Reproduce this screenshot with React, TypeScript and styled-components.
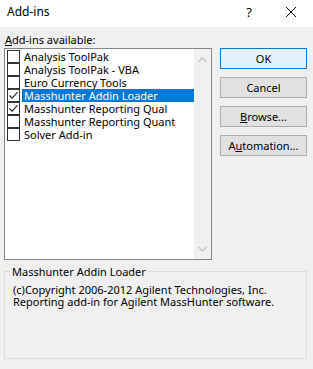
import React from "react";
import styled, { createGlobalStyle } from "styled-components";

const GlobalStyle = createGlobalStyle`
  html, body {
    margin: 0;
    padding: 0;
    background: #f0f0f0;
  }
  body {
    font-family: "Noto Sans", "Open Sans", sans-serif;
    font-size: 11px;
    line-height: 13px;
    color: #000;
  }
`;

const addins = [
  { name: "Analysis ToolPak", checked: false },
  { name: "Analysis ToolPak - VBA", checked: false },
  { name: "Euro Currency Tools", checked: false },
  { name: "Masshunter Addin Loader", checked: true, selected: true },
  { name: "Masshunter Reporting Qual", checked: true },
  { name: "Masshunter Reporting Quant", checked: false },
  { name: "Solver Add-in", checked: false },
];

function App() {
  return (
    <Dialog>
      <GlobalStyle />
      <TitleBar>
        <Title>Add-ins</Title>
        <TitleButtons>
          <HelpGlyph>?</HelpGlyph>
          <svg width="12" height="12" viewBox="0 0 12 12">
            <path d="M1 1 L11 11 M11 1 L1 11" stroke="#000" strokeWidth="1" />
          </svg>
        </TitleButtons>
      </TitleBar>
      <Body>
        <Label>
          <u>A</u>dd-ins available:
        </Label>
        <Main>
          <ListBox>
            <Items>
              {addins.map((a) => (
                <Item key={a.name}>
                  <Check>
                    {a.checked && (
                      <svg width="11" height="11" viewBox="0 0 11 11">
                        <path d="M1.5 5.5 L4.2 8.2 L9.5 2.2" fill="none" stroke="#222" strokeWidth="1.1" />
                      </svg>
                    )}
                  </Check>
                  <ItemText selected={a.selected}>{a.name}</ItemText>
                </Item>
              ))}
            </Items>
            <ScrollTrack>
              <svg width="9" height="6" viewBox="0 0 9 6">
                <path d="M0.5 5 L4.5 1 L8.5 5" fill="none" stroke="#c4c4c4" strokeWidth="1.3" />
              </svg>
              <svg width="9" height="6" viewBox="0 0 9 6">
                <path d="M0.5 1 L4.5 5 L8.5 1" fill="none" stroke="#c4c4c4" strokeWidth="1.3" />
              </svg>
            </ScrollTrack>
          </ListBox>
          <Buttons>
            <Button primary>OK</Button>
            <Button>Cancel</Button>
            <Button>
              <u>B</u>rowse...
            </Button>
            <Button>
              A<u>u</u>tomation...
            </Button>
          </Buttons>
        </Main>
        <GroupBox>
          <Legend>Masshunter Addin Loader</Legend>
          <Description>
            (c)Copyright 2006-2012 Agilent Technologies, Inc.
            <br />
            Reporting add-in for Agilent MassHunter software.
          </Description>
        </GroupBox>
      </Body>
    </Dialog>
  );
}

const Dialog = styled.div`
  width: 313px;
  height: 369px;
  background: #f0f0f0;
  overflow: hidden;
`;

const TitleBar = styled.div`
  height: 27px;
  background: #fff;
  display: flex;
  align-items: center;
  justify-content: space-between;
  padding: 0 16px 0 7px;
`;

const Title = styled.span`
  font-size: 12px;
  line-height: 14px;
  margin-top: -3px;
`;

const TitleButtons = styled.div`
  display: flex;
  align-items: center;
  gap: 33px;
  margin-top: -3px;
`;

const HelpGlyph = styled.span`
  font-size: 13px;
  line-height: 14px;
`;

const Body = styled.div`
  padding: 0 6px 0 4px;
`;

const Label = styled.div`
  height: 21px;
  line-height: 14px;
  padding-top: 6px;
  padding-left: 1px;
  box-sizing: border-box;
`;

const Main = styled.div`
  display: flex;
  gap: 8px;
  align-items: flex-start;
`;

const ListBox = styled.div`
  width: 208px;
  height: 212px;
  box-sizing: border-box;
  border: 1px solid #828790;
  background: #fff;
  display: flex;
`;

const Items = styled.div`
  flex: 1;
  padding: 1px 0 0 2px;
`;

const Item = styled.div`
  height: 13px;
  display: flex;
  align-items: center;
`;

const Check = styled.div`
  width: 13px;
  height: 13px;
  box-sizing: border-box;
  border: 1px solid #333;
  background: #fff;
  display: flex;
  align-items: center;
  justify-content: center;
  margin-right: 2px;
`;

const ItemText = styled.span<{ selected?: boolean }>`
  flex: 1;
  height: 13px;
  line-height: 13px;
  padding-left: 2px;
  white-space: nowrap;
  background: ${(p) => (p.selected ? "#0078d7" : "transparent")};
  color: ${(p) => (p.selected ? "#fff" : "#000")};
`;

const ScrollTrack = styled.div`
  width: 17px;
  background: #f0f0f0;
  display: flex;
  flex-direction: column;
  justify-content: space-between;
  align-items: center;
  padding: 8px 0 7px;
  box-sizing: border-box;
`;

const Buttons = styled.div`
  display: flex;
  flex-direction: column;
  gap: 8px;
`;

const Button = styled.div<{ primary?: boolean }>`
  width: 87px;
  height: 21px;
  box-sizing: border-box;
  border: 1px solid ${(p) => (p.primary ? "#0078d7" : "#adadad")};
  background: ${(p) => (p.primary ? "#e5f1fb" : "#e1e1e1")};
  display: flex;
  align-items: center;
  justify-content: center;
  line-height: 13px;
`;

const GroupBox = styled.div`
  margin-top: 11px;
  height: 88px;
  border: 1px solid #dcdcdc;
  box-sizing: border-box;
  position: relative;
  padding: 12px 8px 0;
`;

const Legend = styled.span`
  position: absolute;
  top: -7px;
  left: 5px;
  padding: 0 2px;
  background: #f0f0f0;
  line-height: 13px;
`;

const Description = styled.div`
  line-height: 12px;
`;

export default App;
